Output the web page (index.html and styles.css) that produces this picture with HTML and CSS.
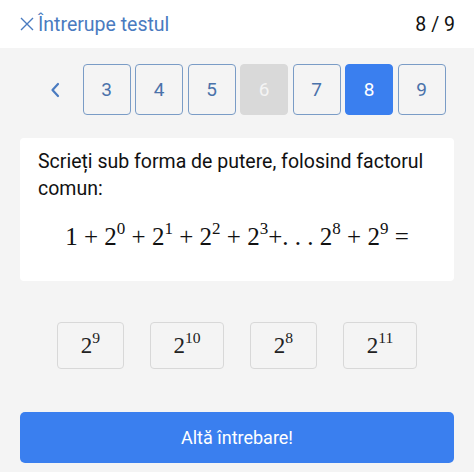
FILE: index.html
```html
<!DOCTYPE html>
<html lang="ro">
<head>
<meta charset="utf-8">
<link rel="stylesheet" href="styles.css">
</head>
<body>
<header class="top">
  <a class="quit"><svg class="x" width="14" height="14" viewBox="0 0 14 14"><path d="M1 1 L13 13 M13 1 L1 13" stroke="#4a7bc0" stroke-width="1.4" fill="none"/></svg>Întrerupe testul</a>
  <span class="count">8 / 9</span>
</header>
<nav class="pager">
  <span class="prev"><svg width="10" height="16" viewBox="0 0 10 16"><path d="M8 2 L2.5 8 L8 14" fill="none" stroke="#4a7bc0" stroke-width="2.2" stroke-linecap="round" stroke-linejoin="round"/></svg></span>
  <span class="pg">3</span>
  <span class="pg">4</span>
  <span class="pg">5</span>
  <span class="pg done">6</span>
  <span class="pg">7</span>
  <span class="pg cur">8</span>
  <span class="pg">9</span>
</nav>
<section class="card">
  <p class="q">Scrieți sub forma de putere, folosind factorul comun:</p>
  <div class="math">1 + 2<sup>0</sup> + 2<sup>1</sup> + 2<sup>2</sup> + 2<sup>3</sup>+. . . 2<sup>8</sup> + 2<sup>9</sup> =</div>
</section>
<div class="answers">
  <span class="ans narrow"><span>2<sup>9</sup></span></span>
  <span class="ans wide"><span>2<sup>10</sup></span></span>
  <span class="ans narrow"><span>2<sup>8</sup></span></span>
  <span class="ans wide"><span>2<sup>11</sup></span></span>
</div>
<button class="next">Altă întrebare!</button>
</body>
</html>
```
FILE: styles.css
```css
* { box-sizing: border-box; }
body {
  margin: 0;
  background: #f4f4f4;
  font-family: Roboto, "Liberation Sans", sans-serif;
  width: 474px;
}
.top {
  height: 48px;
  background: #fff;
  display: flex;
  align-items: center;
  justify-content: space-between;
  padding: 0 19px 0 20px;
}
.quit {
  color: #4a7bc0;
  font-size: 19.5px;
  display: flex;
  align-items: center;
}
.quit .x {
  margin-right: 4px;
}
.count {
  font-size: 19.5px;
  color: #111;
}
.pager {
  display: flex;
  align-items: center;
  gap: 4.5px;
  padding: 16px 0 0 50px;
}
.prev {
  width: 28px;
  display: flex;
  align-items: center;
}
.pg {
  width: 48px;
  height: 51px;
  border: 1.5px solid #7a9cc6;
  border-radius: 4px;
  display: flex;
  align-items: center;
  justify-content: center;
  color: #4a72aa;
  font-size: 19px;
}
.pg.done {
  background: #d9d9d9;
  border-color: #d9d9d9;
  color: #f4f4f4;
}
.pg.cur {
  background: #3a7fef;
  border-color: #3a7fef;
  color: #fff;
}
.card {
  margin: 23px 20px 0;
  height: 143px;
  background: #fff;
  border-radius: 4px;
  padding: 10px 18px 0;
}
.q {
  margin: 0;
  font-size: 19.5px;
  line-height: 27px;
  color: #111;
}
.math {
  font-family: "Liberation Serif", serif;
  font-size: 25px;
  line-height: 32px;
  color: #111;
  text-align: center;
  margin-top: 19px;
}
.math sup, .ans sup {
  font-size: 0.68em;
  vertical-align: 0.62em;
  line-height: 0;
}
.answers {
  display: flex;
  justify-content: center;
  gap: 26px;
  margin-top: 41px;
}
.ans {
  height: 47px;
  border: 1.5px solid #d8d8d8;
  border-radius: 4px;
  display: flex;
  align-items: center;
  justify-content: center;
  font-family: "Liberation Serif", serif;
  font-size: 23px;
  color: #222;
}
.ans.narrow { width: 67px; }
.ans.wide { width: 74px; }
.next {
  display: block;
  margin: 43px 20px 0;
  width: 434px;
  height: 51px;
  background: #3a7fef;
  border: none;
  border-radius: 5px;
  color: #fff;
  font-family: Roboto, "Liberation Sans", sans-serif;
  font-size: 18px;
}
```
